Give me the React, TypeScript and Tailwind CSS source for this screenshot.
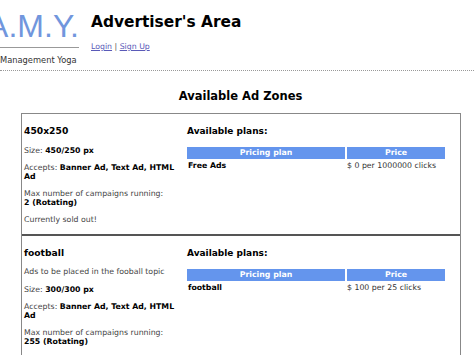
import React from 'react';

interface Zone {
  name: string;
  description?: string;
  size: string;
  accepts: string;
  maxCampaigns: string;
  soldOut?: boolean;
  plans: { plan: string; price: string }[];
}

const zones: Zone[] = [
  {
    name: '450x250',
    size: '450/250 px',
    accepts: 'Banner Ad, Text Ad, HTML Ad',
    maxCampaigns: '2 (Rotating)',
    soldOut: true,
    plans: [{ plan: 'Free Ads', price: '$ 0 per 1000000 clicks' }],
  },
  {
    name: 'football',
    description: 'Ads to be placed in the fooball topic',
    size: '300/300 px',
    accepts: 'Banner Ad, Text Ad, HTML Ad',
    maxCampaigns: '255 (Rotating)',
    plans: [{ plan: 'football', price: '$ 100 per 25 clicks' }],
  },
];

const ZoneRow: React.FC<{ zone: Zone; first: boolean }> = ({ zone, first }) => (
  <div className={`flex ${first ? '' : 'border-t-2 border-[#555]'}`}>
    <div className="w-[162px] px-[2px] pt-[11px] pb-[10px] text-[7.8px] leading-[9px]">
      <div className="text-[9.2px] leading-[12px] font-bold">{zone.name}</div>
      {zone.description && <p className="mt-[8.5px] text-[#444]">{zone.description}</p>}
      <p className="mt-[8.5px]">
        <span className="text-[#444]">Size: </span>
        <b>{zone.size}</b>
      </p>
      <p className="mt-[8px]">
        <span className="text-[#444]">Accepts: </span>
        <b>{zone.accepts}</b>
      </p>
      <p className="mt-[8px]">
        <span className="text-[#444]">Max number of campaigns running:</span>
        <br />
        <b>{zone.maxCampaigns}</b>
      </p>
      {zone.soldOut && <p className="mt-[8px] text-[#444]">Currently sold out!</p>}
    </div>
    <div className="flex-1 pl-[3px] pt-[11px]">
      <div className="text-[9px] leading-[12px] font-bold">Available plans:</div>
      <div className="mt-[10px] grid grid-cols-[158px_98px] gap-x-[2px] text-[7.8px]">
        <div className="bg-[#6495ed] text-white font-bold text-center h-[12px] leading-[12px]">Pricing plan</div>
        <div className="bg-[#6495ed] text-white font-bold text-center h-[12px] leading-[12px]">Price</div>
        {zone.plans.map((p, i) => (
          <React.Fragment key={i}>
            <div className="pl-[1px] pt-[2px] leading-[9px] font-bold">{p.plan}</div>
            <div className="pt-[2px] leading-[9px] text-[#333]">{p.price}</div>
          </React.Fragment>
        ))}
      </div>
    </div>
  </div>
);

const App: React.FC = () => {
  return (
    <div className="min-h-screen bg-white text-black font-['DejaVu_Sans',sans-serif]">
      <div className="h-[71px] flex border-b border-dotted border-[#999]">
        <div className="w-[79px] flex flex-col">
          <div className="mt-[10px] flex justify-end overflow-hidden whitespace-nowrap">
            <span className="font-['Liberation_Sans',sans-serif] text-[32px] leading-[32px] text-[#7196dd]">A.M.Y.</span>
          </div>
          <div className="mt-[5px] border-b border-[#999]" />
          <div className="mt-[7px] text-[8.3px] leading-[10px] text-[#333] whitespace-nowrap">Management Yoga</div>
        </div>
        <div className="ml-[12px]">
          <h1 className="mt-[13px] text-[15.4px] leading-[18px] font-bold">Advertiser's Area</h1>
          <div className="mt-[11px] text-[7.8px] leading-[9px] text-[#555]">
            <a href="#" className="underline text-[#5a5ab8]">Login</a> | <a href="#" className="underline text-[#5a5ab8]">Sign Up</a>
          </div>
        </div>
      </div>
      <h2 className="mt-[18px] pl-[7px] text-center text-[11.5px] leading-[14px] font-bold">Available Ad Zones</h2>
      <div className="mt-[10px] ml-[21px] w-[440px] border border-[#888]">
        {zones.map((z, i) => (
          <ZoneRow key={z.name} zone={z} first={i === 0} />
        ))}
      </div>
    </div>
  );
};

export default App;
